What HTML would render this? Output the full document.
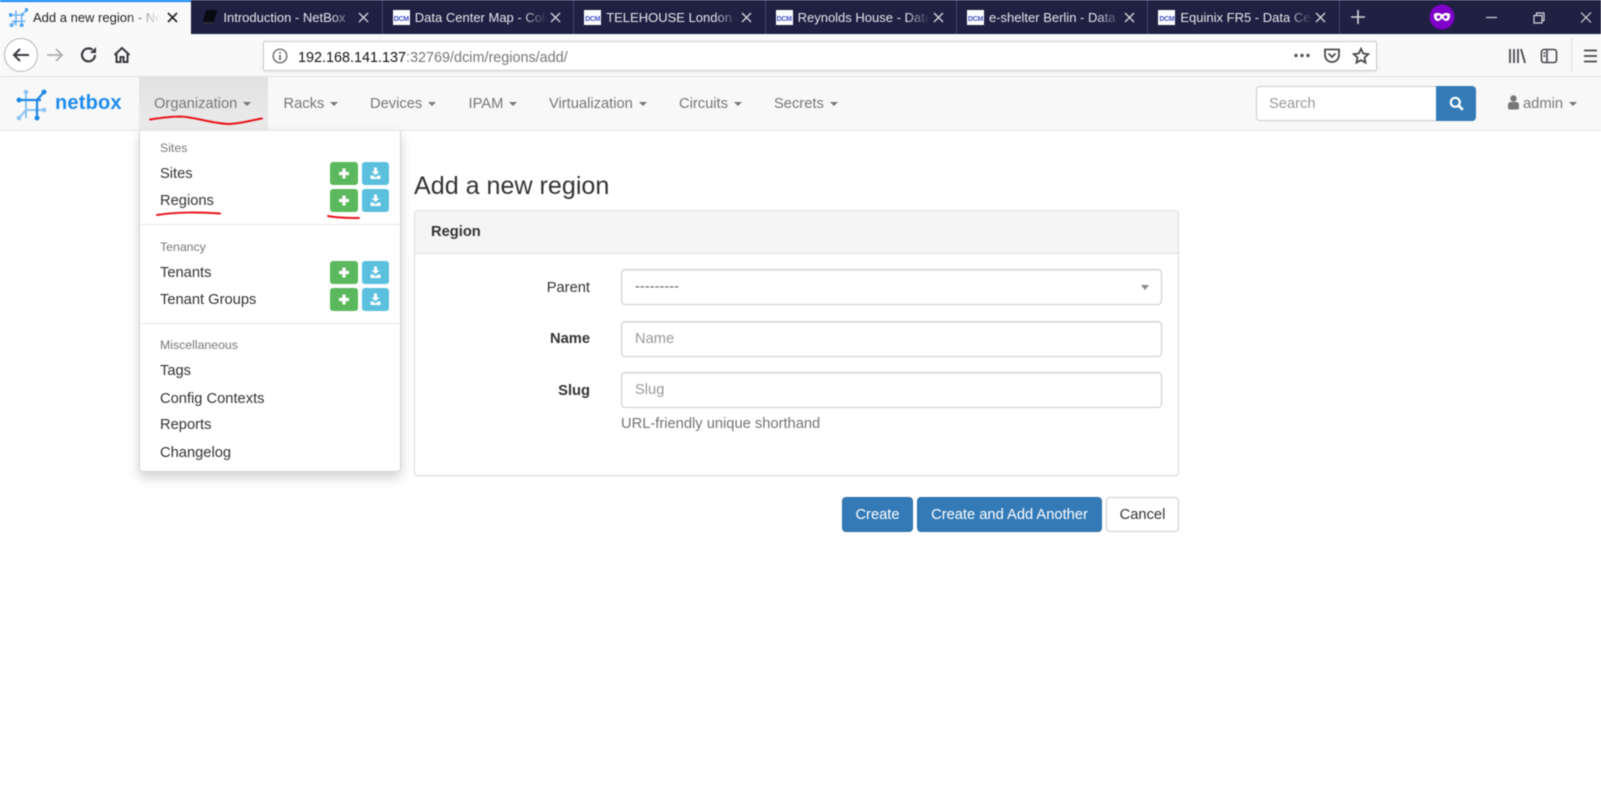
<!DOCTYPE html>
<html><head><meta charset="utf-8"><title>Add a new region - NetBox</title>
<style>
html,body{margin:0;padding:0;width:1601px;height:800px;overflow:hidden;background:#fff;font-family:"Liberation Sans",sans-serif;color:#333}
#root{position:relative;width:1601px;height:800px;overflow:hidden;filter:blur(.4px)}
.a{position:absolute;white-space:nowrap}
#tabs{position:absolute;left:0;top:0;width:1601px;height:34px;background:#1f2042}
.tab{position:absolute;top:0;height:34px;width:191.4px;border-right:1px solid #44456a;box-sizing:border-box}
.tab .l{position:absolute;left:32px;top:9px;width:132px;overflow:hidden;font-size:13px;line-height:17px;white-space:nowrap;color:#e6e6ee;-webkit-mask-image:linear-gradient(90deg,#000 82%,transparent)}
.tab svg.x{position:absolute;left:166px;top:11px}
.dcm{position:absolute;left:10px;top:10px;width:17px;height:15px;background:#fff;overflow:hidden;font-size:7px;line-height:9px;font-weight:bold;color:#3f51c8;text-align:center;padding-top:5px;box-sizing:border-box;letter-spacing:-.3px}
#toolbar{position:absolute;left:0;top:34px;width:1601px;height:43px;background:#f9f9fa;border-bottom:1px solid #e2e2e4;box-sizing:border-box}
#url{position:absolute;left:263px;top:41px;width:1114px;height:30px;background:#fff;border:1px solid #ccc;border-radius:2px;box-sizing:border-box;box-shadow:0 1px 3px rgba(0,0,0,.08)}
#nav{position:absolute;left:0;top:77px;width:1601px;height:54px;background:#f8f8f8;border-bottom:1px solid #e7e7e7;box-sizing:border-box}
.n{position:absolute;top:94px;font-size:14.7px;line-height:20px;color:#777;white-space:nowrap}
.c{display:inline-block;width:0;height:0;border-left:4px solid transparent;border-right:4px solid transparent;border-top:4px solid #777;margin-left:6px;vertical-align:2px}
#menu{position:absolute;left:139px;top:130px;width:262px;height:342px;background:#fff;border:1px solid #d5d5d5;border-top-color:#e5e5e5;box-sizing:border-box;border-radius:0 0 4px 4px;box-shadow:0 6px 12px rgba(0,0,0,.18)}
.m{position:absolute;left:160px;font-size:14.7px;line-height:20px;color:#333;white-space:nowrap}
.h{position:absolute;left:160px;font-size:12.3px;line-height:16px;color:#777;white-space:nowrap}
.hr{position:absolute;left:140px;width:260px;height:1px;background:#e5e5e5}
.g,.b{position:absolute;height:23px;border-radius:3px}
.g{left:330px;width:28px;background:#5cb85c}
.b{left:362px;width:27px;background:#5bc0de}
.g svg,.b svg{position:absolute;left:0;top:0}
#panel{position:absolute;left:414px;top:210px;width:765px;height:266px;border:1px solid #ddd;border-radius:4px;box-sizing:border-box;box-shadow:0 1px 1px rgba(0,0,0,.05);background:#fff}
#ph{position:absolute;left:0;top:0;right:0;height:42px;background:#f5f5f5;border-bottom:1px solid #ddd;border-radius:3px 3px 0 0}
.lab{position:absolute;width:180px;left:410px;text-align:right;font-size:14.7px;line-height:20px;color:#333}
.in{position:absolute;left:621px;width:541px;height:36px;border:1px solid #ccc;border-radius:4px;box-sizing:border-box;background:#fff;box-shadow:inset 0 1px 1px rgba(0,0,0,.075);font-size:14.7px;line-height:34px;padding-left:13px;color:#999}
.btn{position:absolute;top:497px;height:35px;border-radius:4px;box-sizing:border-box;font-size:14.7px;line-height:35px;text-align:center;background:#337ab7;border:1px solid #2e6da4;color:#fff}
</style></head><body><div id="root">

<div id="tabs">
  <div style="position:absolute;left:0;top:0;width:191px;height:34px;background:#f9f9fa;border-top:2px solid #0a84ff;box-sizing:border-box"></div>
  <svg class="a" style="left:9px;top:8px" width="19" height="19" viewBox="0 0 30 30" fill="none" stroke="#5aa9f0" stroke-width="2"><path d="M2 11H24M11 4V28M20 8V27M4 21H26M4 28L11 21M20 11L28 3"/><circle cx="28" cy="3" r="2.200" fill="#2b8de8"/><circle cx="20" cy="27" r="2.200" fill="#2b8de8"/><circle cx="2.500" cy="11" r="2.200" fill="#2b8de8"/><circle cx="4" cy="27" r="2.200" fill="#90c7f7"/></svg>
  <div class="a" style="left:33px;top:9px;width:130px;overflow:hidden;font-size:13px;line-height:17px;color:#222;-webkit-mask-image:linear-gradient(90deg,#000 72%,transparent 98%)">Add a new region - NetBox</div>
  <svg class="a" style="left:166px;top:11px" width="13" height="13" viewBox="0 0 13 13" stroke="#222" stroke-width="1.6"><path d="M2 2L11 11M11 2L2 11"/></svg>

  <div class="tab" style="left:191.400px"><svg class="a" style="left:11px;top:9px" width="16" height="16" viewBox="0 0 16 16"><path d="M4 1H15L12 13H1Z" fill="#0a0a12"/><path d="M1 13L2 15H11L12 13" fill="#2c2c3a"/></svg><div class="l">Introduction - NetBox</div><svg class="x" width="13" height="13" viewBox="0 0 13 13" stroke="#d6d6e0" stroke-width="1.300"><path d="M2 2L11 11M11 2L2 11"/></svg></div>
  <div class="tab" style="left:382.800px"><div class="dcm">DCM</div><div class="l">Data Center Map - Colocation</div><svg class="x" width="13" height="13" viewBox="0 0 13 13" stroke="#d6d6e0" stroke-width="1.300"><path d="M2 2L11 11M11 2L2 11"/></svg></div>
  <div class="tab" style="left:574.200px"><div class="dcm">DCM</div><div class="l">TELEHOUSE London (Metro)</div><svg class="x" width="13" height="13" viewBox="0 0 13 13" stroke="#d6d6e0" stroke-width="1.300"><path d="M2 2L11 11M11 2L2 11"/></svg></div>
  <div class="tab" style="left:765.600px"><div class="dcm">DCM</div><div class="l">Reynolds House - Data Center</div><svg class="x" width="13" height="13" viewBox="0 0 13 13" stroke="#d6d6e0" stroke-width="1.300"><path d="M2 2L11 11M11 2L2 11"/></svg></div>
  <div class="tab" style="left:957px"><div class="dcm">DCM</div><div class="l">e-shelter Berlin - Data Center</div><svg class="x" width="13" height="13" viewBox="0 0 13 13" stroke="#d6d6e0" stroke-width="1.300"><path d="M2 2L11 11M11 2L2 11"/></svg></div>
  <div class="tab" style="left:1148.400px"><div class="dcm">DCM</div><div class="l">Equinix FR5 - Data Center</div><svg class="x" width="13" height="13" viewBox="0 0 13 13" stroke="#d6d6e0" stroke-width="1.300"><path d="M2 2L11 11M11 2L2 11"/></svg></div>

  <svg class="a" style="left:1350px;top:9px" width="16" height="16" viewBox="0 0 16 16" stroke="#d6d6e0" stroke-width="1.600"><path d="M8 1V15M1 8H15"/></svg>
  <svg class="a" style="left:1429px;top:4px" width="26" height="26" viewBox="0 0 26 26"><circle cx="13" cy="13" r="12.500" fill="#7e00c9"/><path d="M5 10C8 8 11 9 13 10.500C15 9 18 8 21 10C21.500 14 20 17 17 17C15 17 14 15 13 14.500C12 15 11 17 9 17C6 17 4.500 14 5 10Z" fill="#fff"/><circle cx="9.500" cy="13" r="1.600" fill="#7e00c9"/><circle cx="16.500" cy="13" r="1.600" fill="#7e00c9"/></svg>
  <svg class="a" style="left:1484px;top:11px" width="110" height="14" viewBox="0 0 110 14" fill="none" stroke="#d6d6e0" stroke-width="1.200"><path d="M2 6.500H13"/><path d="M50 4.500H58V12H50ZM52.500 4.500V2H60V9.500H58"/><path d="M97 1.500L107 11.500M107 1.500L97 11.500"/></svg>
</div>

<div id="toolbar"></div>
<svg class="a" style="left:3px;top:37px" width="38" height="38" viewBox="0 0 38 38"><circle cx="18" cy="18" r="16.500" fill="#fff" stroke="#b5b5b8" stroke-width="1"/><path d="M26 18H11M17 12L11 18L17 24" fill="none" stroke="#3a3a3f" stroke-width="2"/></svg>
<svg class="a" style="left:46px;top:46px" width="18" height="18" viewBox="0 0 18 18"><path d="M1 9H16M10 3L16 9L10 15" fill="none" stroke="#aeaeb0" stroke-width="1.800"/></svg>
<svg class="a" style="left:80px;top:46px" width="18" height="18" viewBox="0 0 18 18"><path d="M15 9A6.500 6.500 0 1 1 12.500 3.800" fill="none" stroke="#3a3a3f" stroke-width="2.200"/><path d="M16 1V7H10Z" fill="#3a3a3f"/></svg>
<svg class="a" style="left:113px;top:46px" width="18" height="18" viewBox="0 0 18 18"><path d="M1.500 9L9 2L16.500 9M3.500 8V16H7.500V11H10.500V16H14.500V8" fill="none" stroke="#3a3a3f" stroke-width="2"/></svg>
<div id="url"></div>
<svg class="a" style="left:272px;top:48px" width="16" height="16" viewBox="0 0 16 16" fill="none" stroke="#55555a" stroke-width="1.200"><circle cx="8" cy="8" r="6.800"/><path d="M8 7V12M8 4V5.500" stroke-width="1.500"/></svg>
<div class="a" style="left:298px;top:48px;font-size:14.400px;line-height:20px;color:#77777a"><span style="color:#111">192.168.141.137</span>:32769/dcim/regions/add/</div>
<svg class="a" style="left:1293px;top:52px" width="18" height="8" viewBox="0 0 18 8" fill="#55555a"><circle cx="3" cy="3.500" r="1.700"/><circle cx="9" cy="3.500" r="1.700"/><circle cx="15" cy="3.500" r="1.700"/></svg>
<svg class="a" style="left:1323px;top:47px" width="18" height="18" viewBox="0 0 18 18" fill="none" stroke="#4a4a4f" stroke-width="1.800"><path d="M2 2.500H16V8A7 7 0 0 1 2 8Z"/><path d="M5.500 6.500L9 10L12.500 6.500"/></svg>
<svg class="a" style="left:1352px;top:47px" width="18" height="18" viewBox="0 0 18 18" fill="none" stroke="#4a4a4f" stroke-width="1.800"><path d="M9 1.800L11.200 6.500L16.300 7.100L12.500 10.600L13.500 15.700L9 13.200L4.500 15.700L5.500 10.600L1.700 7.100L6.800 6.500Z"/></svg>
<svg class="a" style="left:1508px;top:47px" width="18" height="18" viewBox="0 0 18 18" fill="none" stroke="#4a4a4f" stroke-width="1.800"><path d="M2 2V16M6 2V16M10 2V16M13 2L17 16"/></svg>
<svg class="a" style="left:1540px;top:47px" width="18" height="18" viewBox="0 0 18 18" fill="none" stroke="#4a4a4f" stroke-width="1.600"><rect x="1.500" y="2.500" width="15" height="13" rx="2.500"/><path d="M7 2.500V15.500M3.500 6H5.500M3.500 9H5.500"/></svg>
<div class="a" style="left:1571px;top:38px;width:1px;height:34px;background:#dcdcde"></div>
<svg class="a" style="left:1583px;top:48px" width="15" height="16" viewBox="0 0 15 16" stroke="#4a4a4f" stroke-width="1.800"><path d="M1 2.500H14M1 8H14M1 13.500H14"/></svg>

<div id="nav"></div>
<div class="a" style="left:139px;top:77px;width:129px;height:54px;background:linear-gradient(#e2e2e2,#ebebeb)"></div>
<svg class="a" style="left:0;top:80px" width="54" height="45" viewBox="0 0 54 45" fill="none" stroke-width="2">
  <path d="M26 12V38M26 30H44M19 38L26 30" stroke="#8cc4f7"/>
  <path d="M19 20H41M37 20V38M37 20L44 12" stroke="#1e88e5" stroke-width="2.200"/>
  <circle cx="44" cy="12" r="2.500" fill="#1e88e5"/><circle cx="19" cy="20" r="2.500" fill="#1e88e5"/><circle cx="37" cy="38" r="2.500" fill="#1e88e5"/>
  <circle cx="26" cy="12" r="2.300" fill="#8cc4f7"/><circle cx="44" cy="30" r="2.300" fill="#8cc4f7"/><circle cx="19" cy="38" r="2.300" fill="#8cc4f7"/>
</svg>
<div class="a" style="left:55px;top:90px;font-size:20px;line-height:26px;font-weight:bold;color:#1e8cf0;letter-spacing:.2px">netbox</div>

<div class="n" style="left:154px">Organization<span class="c"></span></div>
<div class="n" style="left:283.500px">Racks<span class="c"></span></div>
<div class="n" style="left:370px">Devices<span class="c"></span></div>
<div class="n" style="left:468.500px">IPAM<span class="c"></span></div>
<div class="n" style="left:549px">Virtualization<span class="c"></span></div>
<div class="n" style="left:679px">Circuits<span class="c"></span></div>
<div class="n" style="left:774px">Secrets<span class="c"></span></div>

<div class="a" style="left:1256px;top:86px;width:181px;height:35px;background:#fff;border:1px solid #ccc;border-radius:4px 0 0 4px;box-sizing:border-box;font-size:14.700px;line-height:35px;padding-left:12px;color:#999">Search</div>
<div class="a" style="left:1436px;top:86px;width:40px;height:35px;background:#337ab7;border-radius:0 4px 4px 0"></div>
<svg class="a" style="left:1449px;top:96px" width="15" height="15" viewBox="0 0 15 15" fill="none" stroke="#fff" stroke-width="2.200"><circle cx="6.300" cy="6.300" r="4.500"/><path d="M9.800 9.800L13.800 13.800" stroke-width="2.600"/></svg>
<svg class="a" style="left:1508px;top:95px" width="11" height="15" viewBox="0 0 11 15" fill="#777"><circle cx="5.500" cy="3.500" r="3.200"/><path d="M0 13V9.500C0 8 1.500 7 3 7H8C9.500 7 11 8 11 9.500V13C11 14 10 14.500 9 14.500H2C1 14.500 0 14 0 13Z"/></svg>
<div class="n" style="left:1523px">admin<span class="c"></span></div>

<div class="a" style="left:414px;top:171px;font-size:25.100px;line-height:30px;color:#333">Add a new region</div>
<div id="panel"><div id="ph"></div></div>
<div class="a" style="left:431px;top:221.500px;font-size:14.700px;line-height:20px;font-weight:bold;color:#333">Region</div>

<div class="lab" style="top:277.500px">Parent</div>
<div class="lab" style="top:328.500px;font-weight:bold">Name</div>
<div class="lab" style="top:380.500px;font-weight:bold">Slug</div>
<div class="in" style="top:269px;color:#666">---------</div>
<div class="a" style="left:1141px;top:285px;width:0;height:0;border-left:4px solid transparent;border-right:4px solid transparent;border-top:5px solid #888"></div>
<div class="in" style="top:321px">Name</div>
<div class="in" style="top:371.500px;line-height:35px">Slug</div>
<div class="a" style="left:621px;top:414px;font-size:14.700px;line-height:20px;color:#737373">URL-friendly unique shorthand</div>

<div class="btn" style="left:842px;width:71px">Create</div>
<div class="btn" style="left:917px;width:185px">Create and Add Another</div>
<div class="btn" style="left:1106px;width:73px;background:#fff;border-color:#ccc;color:#333">Cancel</div>

<div id="menu"></div>
<div class="h" style="top:140px">Sites</div>
<div class="m" style="top:164px">Sites</div>
<div class="m" style="top:191px">Regions</div>
<div class="hr" style="top:224px"></div>
<div class="h" style="top:238.500px">Tenancy</div>
<div class="m" style="top:263px">Tenants</div>
<div class="m" style="top:290px">Tenant Groups</div>
<div class="hr" style="top:323px"></div>
<div class="h" style="top:337px">Miscellaneous</div>
<div class="m" style="top:361px">Tags</div>
<div class="m" style="top:388.500px">Config Contexts</div>
<div class="m" style="top:415px">Reports</div>
<div class="m" style="top:443px">Changelog</div>

<div class="g" style="top:162px"><svg width="28" height="23" viewBox="0 0 28 23" stroke="#fff" stroke-width="3.200"><path d="M9 11.500H19M14 6.500V16.500"/></svg></div>
<div class="b" style="top:162px"><svg width="27" height="23" viewBox="0 0 27 23" fill="#fff"><path d="M12 5.500H15V9.500H17.500L13.500 13L9.500 9.500H12Z"/><path d="M8.500 13.500H11L13.500 15.500L16 13.500H18.500V17H8.500Z"/></svg></div>
<div class="g" style="top:189px"><svg width="28" height="23" viewBox="0 0 28 23" stroke="#fff" stroke-width="3.200"><path d="M9 11.500H19M14 6.500V16.500"/></svg></div>
<div class="b" style="top:189px"><svg width="27" height="23" viewBox="0 0 27 23" fill="#fff"><path d="M12 5.500H15V9.500H17.500L13.500 13L9.500 9.500H12Z"/><path d="M8.500 13.500H11L13.500 15.500L16 13.500H18.500V17H8.500Z"/></svg></div>
<div class="g" style="top:261px"><svg width="28" height="23" viewBox="0 0 28 23" stroke="#fff" stroke-width="3.200"><path d="M9 11.500H19M14 6.500V16.500"/></svg></div>
<div class="b" style="top:261px"><svg width="27" height="23" viewBox="0 0 27 23" fill="#fff"><path d="M12 5.500H15V9.500H17.500L13.500 13L9.500 9.500H12Z"/><path d="M8.500 13.500H11L13.500 15.500L16 13.500H18.500V17H8.500Z"/></svg></div>
<div class="g" style="top:288px"><svg width="28" height="23" viewBox="0 0 28 23" stroke="#fff" stroke-width="3.200"><path d="M9 11.500H19M14 6.500V16.500"/></svg></div>
<div class="b" style="top:288px"><svg width="27" height="23" viewBox="0 0 27 23" fill="#fff"><path d="M12 5.500H15V9.500H17.500L13.500 13L9.500 9.500H12Z"/><path d="M8.500 13.500H11L13.500 15.500L16 13.500H18.500V17H8.500Z"/></svg></div>

<svg class="a" style="left:0;top:0" width="1601" height="800" viewBox="0 0 1601 800" fill="none" stroke="#e8141c" stroke-width="2" stroke-linecap="round">
  <path d="M150 119.500C160 118 170 116.500 180 116.500C195 117 210 123 228 124C240 124 252 120 262 118.500"/>
  <path d="M157 215C175 212 200 212 220 213.500"/>
  <path d="M328 216C338 218 350 218 359 218"/>
</svg>
</div></body></html>
